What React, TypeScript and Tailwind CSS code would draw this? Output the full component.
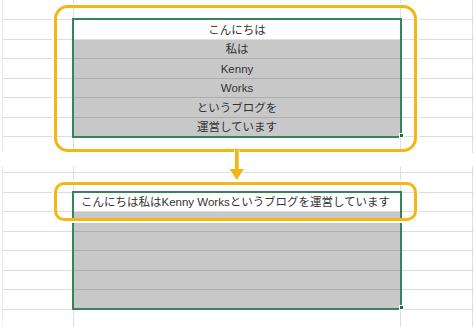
type Cell = { text?: string; fill?: 'white' | 'gray'; align?: 'center' | 'left' };
type Row = { h: string; line: boolean; b?: Cell };

const font = { fontFamily: '"Liberation Sans", "Noto Sans CJK JP", sans-serif' };

// upper sheet: one column of six words
const topRows: Row[] = [
  { h: 'h-[20px]', line: true },
  { h: 'h-[20px]', line: true, b: { text: 'こんにちは', fill: 'white', align: 'center' } },
  { h: 'h-[19px]', line: true, b: { text: '私は', fill: 'gray', align: 'center' } },
  { h: 'h-[20px]', line: true, b: { text: 'Kenny', fill: 'gray', align: 'center' } },
  { h: 'h-[19px]', line: true, b: { text: 'Works', fill: 'gray', align: 'center' } },
  { h: 'h-[20px]', line: true, b: { text: 'というブログを', fill: 'gray', align: 'center' } },
  { h: 'h-[19px]', line: true, b: { text: '運営しています', fill: 'gray', align: 'center' } },
  { h: 'h-[16px]', line: false },
];

// lower sheet: the same cells after they were joined into the first one
const bottomRows: Row[] = [
  { h: 'h-[7px]', line: true },
  { h: 'h-[20px]', line: true },
  {
    h: 'h-[19px]',
    line: true,
    b: { text: 'こんにちは私はKenny Worksというブログを運営しています', fill: 'white', align: 'left' },
  },
  { h: 'h-[20px]', line: true, b: { fill: 'gray' } },
  { h: 'h-[19px]', line: true, b: { fill: 'gray' } },
  { h: 'h-[20px]', line: true, b: { fill: 'gray' } },
  { h: 'h-[19px]', line: true, b: { fill: 'gray' } },
  { h: 'h-[20px]', line: true, b: { fill: 'gray' } },
  { h: 'h-[17px]', line: false },
];

function SheetRow({ row }: { row: Row }) {
  const gray = row.b?.fill === 'gray';
  return (
    <div className={`flex ${row.h}`}>
      <div
        className={`ml-[2px] w-[72px] shrink-0 border-l border-r border-l-[#eeeeee] border-r-[#dedede] ${
          row.line ? 'border-b border-b-[#dedede]' : ''
        }`}
      />
      <div
        className={`w-[327px] shrink-0 border-r border-r-[#dedede] flex items-center overflow-visible whitespace-nowrap text-[11.5px] leading-none text-[#333] pt-[2px] ${
          gray ? 'bg-[#c8c8c8]' : 'bg-white'
        } ${row.line ? (gray ? 'border-b border-b-[#adadad]' : 'border-b border-b-[#dedede]') : ''} ${
          row.b?.align === 'left' ? 'justify-start pl-[7px]' : 'justify-center'
        }`}
      >
        {row.b?.text}
      </div>
      <div
        className={`w-[72px] shrink-0 border-r border-r-[#dedede] ${
          row.line ? 'border-b border-b-[#dedede]' : ''
        }`}
      />
      <div className={`flex-1 ${row.line ? 'border-b border-b-[#dedede]' : ''}`} />
    </div>
  );
}

function Selection({ className, handle }: { className: string; handle: string }) {
  return (
    <>
      <div className={`absolute left-[72px] w-[330px] border-2 border-[#34855a] ${className}`} />
      <div className={`absolute left-[399px] w-[5px] h-[5px] bg-[#1f6b42] border border-white ${handle}`} />
    </>
  );
}

export default function App() {
  return (
    <div className="relative w-[474px] h-[327px] bg-white overflow-hidden" style={font}>
      <section className="flex flex-col h-[153px]">
        {topRows.map((r, i) => (
          <SheetRow key={i} row={r} />
        ))}
      </section>

      <div className="h-[13px]" />

      <section className="flex flex-col h-[161px]">
        {bottomRows.map((r, i) => (
          <SheetRow key={i} row={r} />
        ))}
      </section>

      <Selection className="top-[18px] h-[120px]" handle="top-[133px]" />
      <Selection className="top-[191px] h-[119px]" handle="top-[305px]" />

      {/* callouts */}
      <div className="absolute left-[54px] top-[5px] w-[363px] h-[147px] rounded-[14px] border-[3px] border-[#f5b517] shadow-[0_0_0_2px_#ffffff]" />
      <div className="absolute left-[54px] top-[182px] w-[363px] h-[39px] rounded-[10px] border-[3px] border-[#f5b517] shadow-[0_0_0_2px_#ffffff]" />

      <svg className="absolute left-[228px] top-[150px]" width="18" height="32" viewBox="0 0 18 32">
        <g fill="#f5b517" stroke="#ffffff" strokeWidth="2" paintOrder="stroke" strokeLinejoin="round">
          <rect x="7" y="1" width="3.5" height="19" />
          <polygon points="1.5,19 16,19 8.75,30" />
        </g>
        <rect x="7" y="0" width="3.5" height="21" fill="#f5b517" />
      </svg>
    </div>
  );
}
